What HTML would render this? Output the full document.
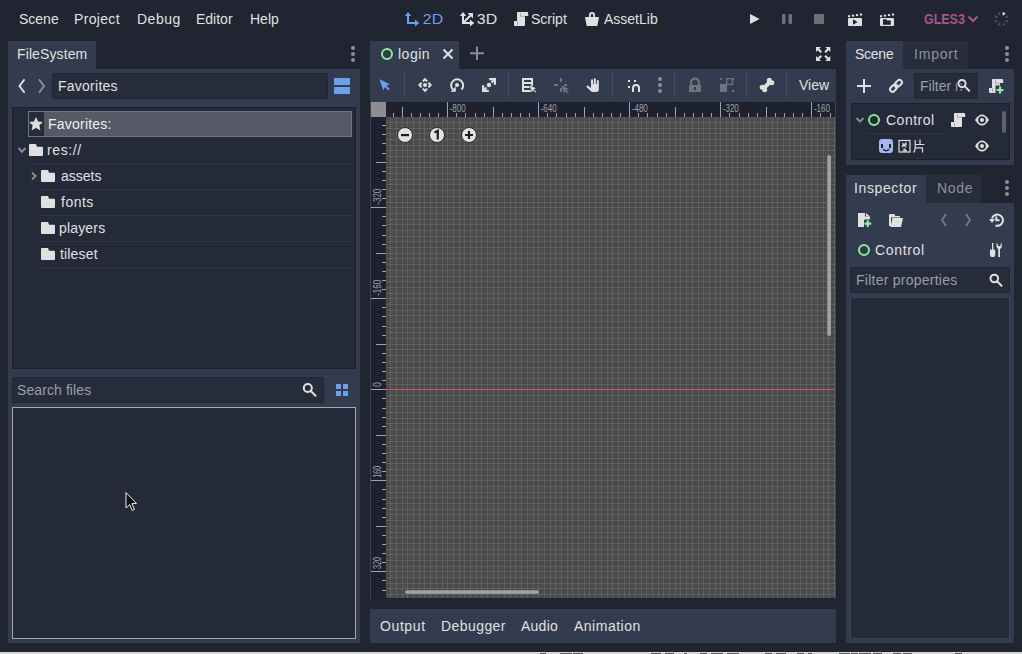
<!DOCTYPE html>
<html><head><meta charset="utf-8">
<style>
*{margin:0;padding:0;box-sizing:border-box}
html,body{width:1022px;height:654px;overflow:hidden;background:#202531;font-family:"Liberation Sans",sans-serif;font-size:14px;color:#e0e0e0}
body{position:relative}
.a{position:absolute}
.t{position:absolute;white-space:nowrap;line-height:14px}
svg{position:absolute;left:0;top:0}
</style></head><body>
<div class="t" style="left:19px;top:12px;color:#e0e0e0;font-size:14px;letter-spacing:0.000px;">Scene</div><div class="t" style="left:74px;top:12px;color:#e0e0e0;font-size:14px;letter-spacing:0.333px;">Project</div><div class="t" style="left:137px;top:12px;color:#e0e0e0;font-size:14px;letter-spacing:0.500px;">Debug</div><div class="t" style="left:196px;top:12px;color:#e0e0e0;font-size:14px;letter-spacing:0.000px;">Editor</div><div class="t" style="left:250px;top:12px;color:#e0e0e0;font-size:14px;letter-spacing:0.000px;">Help</div><div class="t" style="left:423px;top:12px;color:#6d9fea;font-size:14px;transform-origin:1px 0;transform:scaleX(1.133);">2D</div><div class="t" style="left:477px;top:12px;color:#e0e0e0;font-size:14px;transform-origin:1px 0;transform:scaleX(1.133);">3D</div><div class="t" style="left:531px;top:12px;color:#e0e0e0;font-size:14px;letter-spacing:0.000px;">Script</div><div class="t" style="left:604px;top:12px;color:#e0e0e0;font-size:14px;letter-spacing:0.000px;">AssetLib</div><div class="t" style="left:924px;top:12px;color:#a5558b;font-weight:bold;transform-origin:0 0;transform:scaleX(0.89)">GLES3</div><div class="a" style="left:8px;top:41px;width:88px;height:28px;background:#333b4f;"></div><div class="t" style="left:17px;top:47px;color:#e0e0e0;font-size:14px;letter-spacing:0.111px;">FileSystem</div><div class="a" style="left:8px;top:69px;width:352px;height:574px;background:#333b4f;"></div><div class="a" style="left:52px;top:73px;width:276px;height:26px;background:#262c3a;border:1px solid #222735"></div><div class="t" style="left:58px;top:79px;color:#e0e0e0;font-size:14px;letter-spacing:0.250px;">Favorites</div><div class="a" style="left:12px;top:107px;width:344px;height:262px;background:#242a38;border:1px solid #1d212b"></div><div class="a" style="left:28px;top:111px;width:324px;height:26px;background:#565a66;border:1px solid #6e7382"></div><div class="a" style="left:29px;top:112px;width:15px;height:24px;background:#252b39;"></div><div class="t" style="left:48px;top:117px;color:#f0f0f0;font-size:14px;letter-spacing:0.222px;">Favorites:</div><div class="t" style="left:47px;top:143px;color:#e0e0e0;font-size:14px;letter-spacing:0.600px;">res://</div><div class="t" style="left:61px;top:169px;color:#e0e0e0;font-size:14px;letter-spacing:0.000px;">assets</div><div class="t" style="left:61px;top:195px;color:#e0e0e0;font-size:14px;letter-spacing:0.500px;">fonts</div><div class="t" style="left:59px;top:221px;color:#e0e0e0;font-size:14px;letter-spacing:0.167px;">players</div><div class="t" style="left:60px;top:247px;color:#e0e0e0;font-size:14px;letter-spacing:0.167px;">tileset</div><div class="a" style="left:28px;top:163px;width:324px;height:1px;background:#2e3544;"></div><div class="a" style="left:40px;top:189px;width:312px;height:1px;background:#2e3544;"></div><div class="a" style="left:40px;top:215px;width:312px;height:1px;background:#2e3544;"></div><div class="a" style="left:40px;top:241px;width:312px;height:1px;background:#2e3544;"></div><div class="a" style="left:40px;top:267px;width:312px;height:1px;background:#2e3544;"></div><div class="a" style="left:12px;top:377px;width:312px;height:26px;background:#262c3a;border:1px solid #222735"></div><div class="t" style="left:17px;top:383px;color:#9a9ea7;font-size:14px;letter-spacing:0.091px;">Search files</div><div class="a" style="left:12px;top:407px;width:344px;height:232px;background:#242a38;border:1px solid #a3a8b2"></div><div class="a" style="left:370px;top:41px;width:89px;height:28px;background:#333b4f;"></div><div class="t" style="left:398px;top:47px;color:#e0e0e0;font-size:14px;letter-spacing:0.500px;">login</div><div class="a" style="left:370px;top:69px;width:466px;height:33px;background:#333b4f;"></div><div class="a" style="left:404px;top:72px;width:1px;height:26px;background:#434b5f;"></div><div class="a" style="left:508px;top:72px;width:1px;height:26px;background:#434b5f;"></div><div class="a" style="left:612px;top:72px;width:1px;height:26px;background:#434b5f;"></div><div class="a" style="left:674px;top:72px;width:1px;height:26px;background:#434b5f;"></div><div class="a" style="left:746px;top:72px;width:1px;height:26px;background:#434b5f;"></div><div class="a" style="left:786px;top:72px;width:1px;height:26px;background:#434b5f;"></div><div class="t" style="left:799px;top:78px;color:#e0e0e0;font-size:14px;letter-spacing:0.000px;">View</div><div class="a" style="left:370px;top:102px;width:466px;height:497px;background:#1e2230;border-left:1px solid #3a4258;border-right:1px solid #3a4258"></div><div class="a" style="left:386px;top:117px;width:449px;height:481px;background:#4b4b4b;"></div><div class="a" style="left:371px;top:102px;width:15px;height:15px;background:#8b8d92;"></div><div class="a" style="left:370px;top:609px;width:466px;height:34px;background:#333b4f;"></div><div class="t" style="left:380px;top:619px;color:#e0e0e0;font-size:14px;letter-spacing:0.600px;">Output</div><div class="t" style="left:441px;top:619px;color:#e0e0e0;font-size:14px;letter-spacing:0.429px;">Debugger</div><div class="t" style="left:521px;top:619px;color:#e0e0e0;font-size:14px;letter-spacing:0.250px;">Audio</div><div class="t" style="left:574px;top:619px;color:#e0e0e0;font-size:14px;letter-spacing:0.500px;">Animation</div><div class="a" style="left:846px;top:41px;width:57px;height:28px;background:#333b4f;"></div><div class="a" style="left:903px;top:41px;width:65px;height:28px;background:#272d3b;"></div><div class="t" style="left:855px;top:47px;color:#e0e0e0;font-size:14px;letter-spacing:-0.250px;">Scene</div><div class="t" style="left:914px;top:47px;color:#8d929b;font-size:14px;letter-spacing:0.800px;">Import</div><div class="a" style="left:846px;top:69px;width:168px;height:96px;background:#333b4f;"></div><div class="a" style="left:914px;top:73px;width:64px;height:26px;background:#262c3a;border:1px solid #222735;overflow:hidden"></div><div style="position:absolute;left:914px;top:73px;width:64px;height:26px;overflow:hidden"><div class="t" style="left:6px;top:6px;color:#9a9ea7">Filter n</div></div><div class="a" style="left:851px;top:103px;width:159px;height:57px;background:#242a38;border:1px solid #1d212b"></div><div class="t" style="left:886px;top:113px;color:#e0e0e0;font-size:14px;letter-spacing:0.500px;">Control</div><div class="a" style="left:866px;top:133px;width:80px;height:1px;background:#2e3544;"></div><div class="a" style="left:846px;top:175px;width:80px;height:28px;background:#333b4f;"></div><div class="a" style="left:926px;top:175px;width:56px;height:28px;background:#272d3b;"></div><div class="t" style="left:854px;top:181px;color:#e0e0e0;font-size:14px;letter-spacing:0.625px;">Inspector</div><div class="t" style="left:937px;top:181px;color:#8d929b;font-size:14px;letter-spacing:0.667px;">Node</div><div class="a" style="left:846px;top:203px;width:168px;height:440px;background:#333b4f;"></div><div class="t" style="left:875px;top:243px;color:#e0e0e0;font-size:14px;letter-spacing:0.667px;">Control</div><div class="a" style="left:850px;top:267px;width:160px;height:26px;background:#262c3a;border:1px solid #222735"></div><div class="t" style="left:856px;top:273px;color:#9a9ea7;font-size:14px;letter-spacing:0.250px;">Filter properties</div><div class="a" style="left:850px;top:297px;width:160px;height:342px;background:#242a38;border:1px solid #3a4259"></div><div class="a" style="left:0px;top:652px;width:1022px;height:2px;background:#d8d8d8;"></div><div class="a" style="left:540px;top:653px;width:6px;height:1px;background:#5a5a5a;"></div><div class="a" style="left:560px;top:653px;width:12px;height:1px;background:#5a5a5a;"></div><div class="a" style="left:573px;top:653px;width:10px;height:1px;background:#5a5a5a;"></div><div class="a" style="left:651px;top:653px;width:10px;height:1px;background:#5a5a5a;"></div><div class="a" style="left:665px;top:653px;width:9px;height:1px;background:#5a5a5a;"></div><div class="a" style="left:684px;top:653px;width:3px;height:1px;background:#5a5a5a;"></div><div class="a" style="left:700px;top:653px;width:7px;height:1px;background:#5a5a5a;"></div><div class="a" style="left:711px;top:653px;width:12px;height:1px;background:#5a5a5a;"></div><div class="a" style="left:727px;top:653px;width:12px;height:1px;background:#5a5a5a;"></div><div class="a" style="left:765px;top:653px;width:7px;height:1px;background:#5a5a5a;"></div><div class="a" style="left:776px;top:653px;width:10px;height:1px;background:#5a5a5a;"></div><div class="a" style="left:797px;top:653px;width:7px;height:1px;background:#5a5a5a;"></div><div class="a" style="left:808px;top:653px;width:4px;height:1px;background:#5a5a5a;"></div><div class="a" style="left:839px;top:653px;width:11px;height:1px;background:#5a5a5a;"></div><div class="a" style="left:851px;top:653px;width:7px;height:1px;background:#5a5a5a;"></div><div class="a" style="left:859px;top:653px;width:12px;height:1px;background:#5a5a5a;"></div><div class="a" style="left:873px;top:653px;width:9px;height:1px;background:#5a5a5a;"></div><div class="a" style="left:893px;top:653px;width:8px;height:1px;background:#5a5a5a;"></div><div class="a" style="left:903px;top:653px;width:9px;height:1px;background:#5a5a5a;"></div><div class="a" style="left:955px;top:653px;width:7px;height:1px;background:#5a5a5a;"></div>
<svg width="1022" height="654" viewBox="0 0 1022 654">
<g fill="#6d9fea"><path d="M404.8 16 L408 12 L411.2 16 Z"/><rect x="407" y="15" width="2" height="9"/><rect x="407" y="22" width="9" height="2"/><path d="M415 19.6 L419.3 23 L415 26.4 Z"/></g><g fill="#e0e0e0"><path d="M459.8 16 L463 12 L466.2 16 Z"/><rect x="462" y="15" width="2" height="9"/><rect x="462" y="22" width="9" height="2"/><path d="M470 19.6 L474.3 23 L470 26.4 Z"/><path d="M463.3 21.3 L469.8 14.8 L471.2 16.2 L464.7 22.7 Z"/><path d="M467.5 13 L473 13 L473 18.5 Z"/></g><g fill="#e0e0e0"><path d="M517.5 12 H527 a1.2 1.2 0 0 1 1.2 1.2 V16 H525 V25 a1 1 0 0 1 -1 1 H515 a1 1 0 0 1 -1 -1 V21 H517 V13 a1 1 0 0 1 .5 -1 Z"/></g><path d="M520.5 13.2 V16.3 H524.8 M517.5 21.3 V25.3" stroke="#a9a9a9" stroke-width="1" fill="none"/><g fill="#e0e0e0"><path d="M589 17 V15 a3 3 0 0 1 6 0 V17 H593.2 V15.2 a1.2 1.2 0 0 0 -2.4 0 V17 Z"/><path d="M585 17 H599 L597.3 26 H586.7 Z"/></g><path d="M750 14 L759.6 19 L750 24 Z" fill="#e0e0e0"/><g fill="#6c7079"><rect x="782" y="14" width="3.5" height="10" rx="1"/><rect x="788.5" y="14" width="3.5" height="10" rx="1"/><rect x="814" y="14" width="10" height="10" rx="1"/></g><g fill="#e0e0e0"><rect x="848" y="18" width="14" height="8" rx="0.8"/><rect x="847.9" y="15.2" width="2.2" height="2" /><rect x="851.9" y="14.649999999999999" width="2.2" height="2" /><rect x="855.9" y="14.1" width="2.2" height="2" /><rect x="859.9" y="13.549999999999999" width="2.2" height="2" /></g><path d="M853 19.2 L857.6 22 L853 24.8 Z" fill="#202531"/><g fill="#e0e0e0"><rect x="880" y="18" width="14" height="8" rx="0.8"/><rect x="879.9" y="15.2" width="2.2" height="2" /><rect x="883.9" y="14.649999999999999" width="2.2" height="2" /><rect x="887.9" y="14.1" width="2.2" height="2" /><rect x="891.9" y="13.549999999999999" width="2.2" height="2" /></g><path d="M883 19.2 H886.2 L887.2 20.4 H890.8 V24.8 H883 Z" fill="#202531"/><path d="M968.5 16.5 L973 21 L977.5 16.5" stroke="#a5558b" stroke-width="2" fill="none"/><path d="M1002.76 15.95 L1002.61 11.89 L1005.75 13.19 Z" fill="#e8e8e8"/><path d="M1004.55 17.74 L1007.31 14.75 L1008.61 17.89 Z" fill="#494d58"/><path d="M1004.55 20.26 L1008.61 20.11 L1007.31 23.25 Z" fill="#494d58"/><path d="M1002.76 22.05 L1005.75 24.81 L1002.61 26.11 Z" fill="#494d58"/><path d="M1000.24 22.05 L1000.39 26.11 L997.25 24.81 Z" fill="#494d58"/><path d="M998.45 20.26 L995.69 23.25 L994.39 20.11 Z" fill="#494d58"/><path d="M998.45 17.74 L994.39 17.89 L995.69 14.75 Z" fill="#494d58"/><path d="M1000.24 15.95 L997.25 13.19 L1000.39 11.89 Z" fill="#494d58"/><g fill="#8c9099"><circle cx="353" cy="48" r="2"/><circle cx="353" cy="54" r="2"/><circle cx="353" cy="60" r="2"/></g><path d="M24 80 L19.5 86 L24 92" stroke="#e0e0e0" stroke-width="2" fill="none" stroke-linecap="round"/><path d="M39.5 80 L44 86 L39.5 92" stroke="#8d9099" stroke-width="2" fill="none" stroke-linecap="round"/><g fill="#6d9fea"><rect x="334" y="78" width="16" height="7"/><rect x="334" y="87" width="16" height="7"/></g><path d="M36 117.8 L37.8 121.9 L42.3 122.3 L38.9 125.3 L39.9 129.8 L36 127.4 L32.1 129.8 L33.1 125.3 L29.7 122.3 L34.2 121.9 Z" fill="#e0e0e0" stroke="#e0e0e0" stroke-width="0.8" stroke-linejoin="round"/><path d="M18.5 148 L22 151.8 L25.5 148" stroke="#868a93" stroke-width="2" fill="none"/><path d="M29 145 a1 1 0 0 1 1 -1 H36 L37 146.7 H42 a1 1 0 0 1 1 1 V155 a1 1 0 0 1 -1 1 H30 a1 1 0 0 1 -1 -1 Z" fill="#e0e0e0"/><path d="M32 172.5 L35.5 176 L32 179.5" stroke="#868a93" stroke-width="2" fill="none"/><path d="M41 171 a1 1 0 0 1 1 -1 H48 L49 172.7 H54 a1 1 0 0 1 1 1 V181 a1 1 0 0 1 -1 1 H42 a1 1 0 0 1 -1 -1 Z" fill="#e0e0e0"/><path d="M41 197 a1 1 0 0 1 1 -1 H48 L49 198.7 H54 a1 1 0 0 1 1 1 V207 a1 1 0 0 1 -1 1 H42 a1 1 0 0 1 -1 -1 Z" fill="#e0e0e0"/><path d="M41 223 a1 1 0 0 1 1 -1 H48 L49 224.7 H54 a1 1 0 0 1 1 1 V233 a1 1 0 0 1 -1 1 H42 a1 1 0 0 1 -1 -1 Z" fill="#e0e0e0"/><path d="M41 249 a1 1 0 0 1 1 -1 H48 L49 250.7 H54 a1 1 0 0 1 1 1 V259 a1 1 0 0 1 -1 1 H42 a1 1 0 0 1 -1 -1 Z" fill="#e0e0e0"/><g stroke="#e0e0e0" stroke-width="2" fill="none"><circle cx="307.8" cy="388" r="4"/><path d="M310.8 391 L315.5 395.7" stroke-linecap="round"/></g><g fill="#6d9fea"><rect x="336" y="384" width="5" height="5"/><rect x="343" y="384" width="5" height="5"/><rect x="336" y="391" width="5" height="5"/><rect x="343" y="391" width="5" height="5"/></g><path d="M126 492.5 V508 L129.6 504.6 L132.3 510.5 L134.5 509.5 L131.9 503.7 L136.5 503.4 Z" fill="#111" stroke="#eee" stroke-width="1"/><circle cx="387" cy="54" r="5" stroke="#8eea98" stroke-width="2" fill="none"/><path d="M443.5 49.5 L452.5 58.5 M452.5 49.5 L443.5 58.5" stroke="#e0e0e0" stroke-width="2"/><path d="M477 46.5 V60 M470 53.2 H484" stroke="#8a8e96" stroke-width="2"/><g fill="#e0e0e0"><path d="M816 47 H821 L819.3 48.7 L822 51.4 L820.4 53 L817.7 50.3 L816 52 Z"/><path d="M830.3 47 H825.3 L827 48.7 L824.3 51.4 L825.9 53 L828.6 50.3 L830.3 52 Z"/><path d="M816 61 H821 L819.3 59.3 L822 56.6 L820.4 55 L817.7 57.7 L816 56 Z"/><path d="M830.3 61 H825.3 L827 59.3 L824.3 56.6 L825.9 55 L828.6 57.7 L830.3 56 Z"/></g><g fill="#ffffff" fill-opacity="0.1"><rect x="390" y="117" width="1" height="481"/><rect x="396" y="117" width="1" height="481"/><rect x="402" y="117" width="1" height="481"/><rect x="407" y="117" width="1" height="481"/><rect x="413" y="117" width="1" height="481"/><rect x="419" y="117" width="1" height="481"/><rect x="424" y="117" width="1" height="481"/><rect x="430" y="117" width="1" height="481"/><rect x="436" y="117" width="1" height="481"/><rect x="442" y="117" width="1" height="481"/><rect x="447" y="117" width="1" height="481"/><rect x="453" y="117" width="1" height="481"/><rect x="459" y="117" width="1" height="481"/><rect x="464" y="117" width="1" height="481"/><rect x="470" y="117" width="1" height="481"/><rect x="476" y="117" width="1" height="481"/><rect x="481" y="117" width="1" height="481"/><rect x="487" y="117" width="1" height="481"/><rect x="493" y="117" width="1" height="481"/><rect x="498" y="117" width="1" height="481"/><rect x="504" y="117" width="1" height="481"/><rect x="510" y="117" width="1" height="481"/><rect x="515" y="117" width="1" height="481"/><rect x="521" y="117" width="1" height="481"/><rect x="527" y="117" width="1" height="481"/><rect x="533" y="117" width="1" height="481"/><rect x="538" y="117" width="1" height="481"/><rect x="544" y="117" width="1" height="481"/><rect x="550" y="117" width="1" height="481"/><rect x="555" y="117" width="1" height="481"/><rect x="561" y="117" width="1" height="481"/><rect x="567" y="117" width="1" height="481"/><rect x="572" y="117" width="1" height="481"/><rect x="578" y="117" width="1" height="481"/><rect x="584" y="117" width="1" height="481"/><rect x="589" y="117" width="1" height="481"/><rect x="595" y="117" width="1" height="481"/><rect x="601" y="117" width="1" height="481"/><rect x="607" y="117" width="1" height="481"/><rect x="612" y="117" width="1" height="481"/><rect x="618" y="117" width="1" height="481"/><rect x="624" y="117" width="1" height="481"/><rect x="629" y="117" width="1" height="481"/><rect x="635" y="117" width="1" height="481"/><rect x="641" y="117" width="1" height="481"/><rect x="646" y="117" width="1" height="481"/><rect x="652" y="117" width="1" height="481"/><rect x="658" y="117" width="1" height="481"/><rect x="663" y="117" width="1" height="481"/><rect x="669" y="117" width="1" height="481"/><rect x="675" y="117" width="1" height="481"/><rect x="680" y="117" width="1" height="481"/><rect x="686" y="117" width="1" height="481"/><rect x="692" y="117" width="1" height="481"/><rect x="698" y="117" width="1" height="481"/><rect x="703" y="117" width="1" height="481"/><rect x="709" y="117" width="1" height="481"/><rect x="715" y="117" width="1" height="481"/><rect x="720" y="117" width="1" height="481"/><rect x="726" y="117" width="1" height="481"/><rect x="732" y="117" width="1" height="481"/><rect x="737" y="117" width="1" height="481"/><rect x="743" y="117" width="1" height="481"/><rect x="749" y="117" width="1" height="481"/><rect x="754" y="117" width="1" height="481"/><rect x="760" y="117" width="1" height="481"/><rect x="766" y="117" width="1" height="481"/><rect x="772" y="117" width="1" height="481"/><rect x="777" y="117" width="1" height="481"/><rect x="783" y="117" width="1" height="481"/><rect x="789" y="117" width="1" height="481"/><rect x="794" y="117" width="1" height="481"/><rect x="800" y="117" width="1" height="481"/><rect x="806" y="117" width="1" height="481"/><rect x="811" y="117" width="1" height="481"/><rect x="817" y="117" width="1" height="481"/><rect x="823" y="117" width="1" height="481"/><rect x="828" y="117" width="1" height="481"/><rect x="834" y="117" width="1" height="481"/><rect x="386" y="122" width="449" height="1"/><rect x="386" y="128" width="449" height="1"/><rect x="386" y="133" width="449" height="1"/><rect x="386" y="139" width="449" height="1"/><rect x="386" y="145" width="449" height="1"/><rect x="386" y="150" width="449" height="1"/><rect x="386" y="156" width="449" height="1"/><rect x="386" y="162" width="449" height="1"/><rect x="386" y="167" width="449" height="1"/><rect x="386" y="173" width="449" height="1"/><rect x="386" y="179" width="449" height="1"/><rect x="386" y="184" width="449" height="1"/><rect x="386" y="190" width="449" height="1"/><rect x="386" y="196" width="449" height="1"/><rect x="386" y="202" width="449" height="1"/><rect x="386" y="207" width="449" height="1"/><rect x="386" y="213" width="449" height="1"/><rect x="386" y="219" width="449" height="1"/><rect x="386" y="224" width="449" height="1"/><rect x="386" y="230" width="449" height="1"/><rect x="386" y="236" width="449" height="1"/><rect x="386" y="241" width="449" height="1"/><rect x="386" y="247" width="449" height="1"/><rect x="386" y="253" width="449" height="1"/><rect x="386" y="258" width="449" height="1"/><rect x="386" y="264" width="449" height="1"/><rect x="386" y="270" width="449" height="1"/><rect x="386" y="276" width="449" height="1"/><rect x="386" y="281" width="449" height="1"/><rect x="386" y="287" width="449" height="1"/><rect x="386" y="293" width="449" height="1"/><rect x="386" y="298" width="449" height="1"/><rect x="386" y="304" width="449" height="1"/><rect x="386" y="310" width="449" height="1"/><rect x="386" y="315" width="449" height="1"/><rect x="386" y="321" width="449" height="1"/><rect x="386" y="327" width="449" height="1"/><rect x="386" y="332" width="449" height="1"/><rect x="386" y="338" width="449" height="1"/><rect x="386" y="344" width="449" height="1"/><rect x="386" y="349" width="449" height="1"/><rect x="386" y="355" width="449" height="1"/><rect x="386" y="361" width="449" height="1"/><rect x="386" y="367" width="449" height="1"/><rect x="386" y="372" width="449" height="1"/><rect x="386" y="378" width="449" height="1"/><rect x="386" y="384" width="449" height="1"/><rect x="386" y="389" width="449" height="1"/><rect x="386" y="395" width="449" height="1"/><rect x="386" y="401" width="449" height="1"/><rect x="386" y="406" width="449" height="1"/><rect x="386" y="412" width="449" height="1"/><rect x="386" y="418" width="449" height="1"/><rect x="386" y="423" width="449" height="1"/><rect x="386" y="429" width="449" height="1"/><rect x="386" y="435" width="449" height="1"/><rect x="386" y="441" width="449" height="1"/><rect x="386" y="446" width="449" height="1"/><rect x="386" y="452" width="449" height="1"/><rect x="386" y="458" width="449" height="1"/><rect x="386" y="463" width="449" height="1"/><rect x="386" y="469" width="449" height="1"/><rect x="386" y="475" width="449" height="1"/><rect x="386" y="480" width="449" height="1"/><rect x="386" y="486" width="449" height="1"/><rect x="386" y="492" width="449" height="1"/><rect x="386" y="497" width="449" height="1"/><rect x="386" y="503" width="449" height="1"/><rect x="386" y="509" width="449" height="1"/><rect x="386" y="514" width="449" height="1"/><rect x="386" y="520" width="449" height="1"/><rect x="386" y="526" width="449" height="1"/><rect x="386" y="532" width="449" height="1"/><rect x="386" y="537" width="449" height="1"/><rect x="386" y="543" width="449" height="1"/><rect x="386" y="549" width="449" height="1"/><rect x="386" y="554" width="449" height="1"/><rect x="386" y="560" width="449" height="1"/><rect x="386" y="566" width="449" height="1"/><rect x="386" y="571" width="449" height="1"/><rect x="386" y="577" width="449" height="1"/><rect x="386" y="583" width="449" height="1"/><rect x="386" y="588" width="449" height="1"/><rect x="386" y="594" width="449" height="1"/></g><rect x="386" y="389" width="449" height="1" fill="#c85a5a"/><g fill="#9ea2aa"><rect x="393" y="113" width="1" height="4"/><rect x="402" y="107" width="1" height="10"/><rect x="411" y="113" width="1" height="4"/><rect x="420" y="113" width="1" height="4"/><rect x="429" y="113" width="1" height="4"/><rect x="438" y="113" width="1" height="4"/><rect x="447" y="102" width="1" height="15"/><rect x="456" y="113" width="1" height="4"/><rect x="465" y="113" width="1" height="4"/><rect x="475" y="113" width="1" height="4"/><rect x="484" y="113" width="1" height="4"/><rect x="493" y="107" width="1" height="10"/><rect x="502" y="113" width="1" height="4"/><rect x="511" y="113" width="1" height="4"/><rect x="520" y="113" width="1" height="4"/><rect x="529" y="113" width="1" height="4"/><rect x="538" y="102" width="1" height="15"/><rect x="547" y="113" width="1" height="4"/><rect x="556" y="113" width="1" height="4"/><rect x="566" y="113" width="1" height="4"/><rect x="575" y="113" width="1" height="4"/><rect x="584" y="107" width="1" height="10"/><rect x="593" y="113" width="1" height="4"/><rect x="602" y="113" width="1" height="4"/><rect x="611" y="113" width="1" height="4"/><rect x="620" y="113" width="1" height="4"/><rect x="629" y="102" width="1" height="15"/><rect x="638" y="113" width="1" height="4"/><rect x="647" y="113" width="1" height="4"/><rect x="657" y="113" width="1" height="4"/><rect x="666" y="113" width="1" height="4"/><rect x="675" y="107" width="1" height="10"/><rect x="684" y="113" width="1" height="4"/><rect x="693" y="113" width="1" height="4"/><rect x="702" y="113" width="1" height="4"/><rect x="711" y="113" width="1" height="4"/><rect x="720" y="102" width="1" height="15"/><rect x="729" y="113" width="1" height="4"/><rect x="739" y="113" width="1" height="4"/><rect x="748" y="113" width="1" height="4"/><rect x="757" y="113" width="1" height="4"/><rect x="766" y="107" width="1" height="10"/><rect x="775" y="113" width="1" height="4"/><rect x="784" y="113" width="1" height="4"/><rect x="793" y="113" width="1" height="4"/><rect x="802" y="113" width="1" height="4"/><rect x="811" y="102" width="1" height="15"/><rect x="820" y="113" width="1" height="4"/><rect x="830" y="113" width="1" height="4"/><rect x="382" y="125" width="4" height="1"/><rect x="382" y="134" width="4" height="1"/><rect x="382" y="143" width="4" height="1"/><rect x="382" y="153" width="4" height="1"/><rect x="376" y="162" width="10" height="1"/><rect x="382" y="171" width="4" height="1"/><rect x="382" y="180" width="4" height="1"/><rect x="382" y="189" width="4" height="1"/><rect x="382" y="198" width="4" height="1"/><rect x="371" y="207" width="15" height="1"/><rect x="382" y="216" width="4" height="1"/><rect x="382" y="225" width="4" height="1"/><rect x="382" y="235" width="4" height="1"/><rect x="382" y="244" width="4" height="1"/><rect x="376" y="253" width="10" height="1"/><rect x="382" y="262" width="4" height="1"/><rect x="382" y="271" width="4" height="1"/><rect x="382" y="280" width="4" height="1"/><rect x="382" y="289" width="4" height="1"/><rect x="371" y="298" width="15" height="1"/><rect x="382" y="307" width="4" height="1"/><rect x="382" y="316" width="4" height="1"/><rect x="382" y="326" width="4" height="1"/><rect x="382" y="335" width="4" height="1"/><rect x="376" y="344" width="10" height="1"/><rect x="382" y="353" width="4" height="1"/><rect x="382" y="362" width="4" height="1"/><rect x="382" y="371" width="4" height="1"/><rect x="382" y="380" width="4" height="1"/><rect x="371" y="389" width="15" height="1"/><rect x="382" y="398" width="4" height="1"/><rect x="382" y="408" width="4" height="1"/><rect x="382" y="417" width="4" height="1"/><rect x="382" y="426" width="4" height="1"/><rect x="376" y="435" width="10" height="1"/><rect x="382" y="444" width="4" height="1"/><rect x="382" y="453" width="4" height="1"/><rect x="382" y="462" width="4" height="1"/><rect x="382" y="471" width="4" height="1"/><rect x="371" y="480" width="15" height="1"/><rect x="382" y="489" width="4" height="1"/><rect x="382" y="499" width="4" height="1"/><rect x="382" y="508" width="4" height="1"/><rect x="382" y="517" width="4" height="1"/><rect x="376" y="526" width="10" height="1"/><rect x="382" y="535" width="4" height="1"/><rect x="382" y="544" width="4" height="1"/><rect x="382" y="553" width="4" height="1"/><rect x="382" y="562" width="4" height="1"/><rect x="371" y="571" width="15" height="1"/><rect x="382" y="580" width="4" height="1"/><rect x="382" y="590" width="4" height="1"/></g><text x="449.7" y="112" font-size="10" fill="#9ea2aa" font-family="Liberation Sans" textLength="16" lengthAdjust="spacingAndGlyphs">-800</text><text x="540.7" y="112" font-size="10" fill="#9ea2aa" font-family="Liberation Sans" textLength="16" lengthAdjust="spacingAndGlyphs">-640</text><text x="631.8" y="112" font-size="10" fill="#9ea2aa" font-family="Liberation Sans" textLength="16" lengthAdjust="spacingAndGlyphs">-480</text><text x="722.8" y="112" font-size="10" fill="#9ea2aa" font-family="Liberation Sans" textLength="16" lengthAdjust="spacingAndGlyphs">-320</text><text x="813.9" y="112" font-size="10" fill="#9ea2aa" font-family="Liberation Sans" textLength="16" lengthAdjust="spacingAndGlyphs">-160</text><text transform="translate(381,204.7) rotate(-90)" x="0" y="0" font-size="10" fill="#9ea2aa" font-family="Liberation Sans" textLength="16" lengthAdjust="spacingAndGlyphs">-320</text><text transform="translate(381,295.8) rotate(-90)" x="0" y="0" font-size="10" fill="#9ea2aa" font-family="Liberation Sans" textLength="16" lengthAdjust="spacingAndGlyphs">-160</text><text transform="translate(381,386.8) rotate(-90)" x="0" y="0" font-size="10" fill="#9ea2aa" font-family="Liberation Sans" textLength="4.5" lengthAdjust="spacingAndGlyphs">0</text><text transform="translate(381,477.8) rotate(-90)" x="0" y="0" font-size="10" fill="#9ea2aa" font-family="Liberation Sans" textLength="12" lengthAdjust="spacingAndGlyphs">160</text><text transform="translate(381,568.9) rotate(-90)" x="0" y="0" font-size="10" fill="#9ea2aa" font-family="Liberation Sans" textLength="12" lengthAdjust="spacingAndGlyphs">320</text><circle cx="405" cy="135" r="7.5" fill="#e2e2e2" stroke="#2b2b2b" stroke-width="1"/><rect x="401" y="134" width="8" height="2.2" fill="#1e1e1e"/><circle cx="437" cy="135" r="7.5" fill="#e2e2e2" stroke="#2b2b2b" stroke-width="1"/><path d="M434.5 132.5 L437.8 130.8 V139.5" stroke="#1e1e1e" stroke-width="2.2" fill="none"/><circle cx="469" cy="135" r="7.5" fill="#e2e2e2" stroke="#2b2b2b" stroke-width="1"/><path d="M465 135 H473 M469 131 V139" stroke="#1e1e1e" stroke-width="2.2"/><rect x="827.3" y="155" width="3.6" height="181" rx="1.8" fill="#a3a3a3"/><rect x="405" y="590.2" width="134" height="3.6" rx="1.8" fill="#a3a3a3"/><path d="M379.4 79.3 L390 84.3 L386.3 85.6 L389.8 89 L388.3 90.4 L384.9 86.9 L383.4 90.6 Z" fill="#6d9fea"/><g fill="#e0e0e0"><circle cx="425" cy="85" r="2"/></g><g stroke="#e0e0e0" stroke-width="2" fill="none"><path d="M422.8 81.4 L425 79.2 L427.2 81.4"/><path d="M422.8 88.6 L425 90.8 L427.2 88.6"/><path d="M421.6 82.8 L419.4 85 L421.6 87.2"/><path d="M428.4 82.8 L430.6 85 L428.4 87.2"/></g><g><circle cx="457" cy="85" r="2" fill="#e0e0e0"/><path d="M452.8 89.5 A6 6 0 1 1 461.5 89.5" stroke="#e0e0e0" stroke-width="2" fill="none"/><path d="M450.5 91.8 H455.8 V86.5 Z" fill="#e0e0e0"/></g><g fill="#e0e0e0"><circle cx="489" cy="85" r="2.2"/></g><g stroke="#e0e0e0" stroke-width="2.2" fill="none"><path d="M489.2 79.1 H494.9 V84.8"/><path d="M483.1 85.2 V90.9 H488.8"/><path d="M494.5 79.5 L491.5 82.5"/><path d="M483.5 90.5 L486.5 87.5"/></g><path d="M522 78 H533 V92 H522 Z M524 80 V82 H531 V80 Z M524 84 V86 H531 V84 Z M524 88 V90 H531 V88 Z" fill="#e0e0e0" fill-rule="evenodd"/><path d="M528.5 84 L537.5 88.3 L534.6 89.4 L537.3 92.1 L535.6 93.8 L532.9 91.1 L531.8 94 Z" fill="#333b4f"/><path d="M529.6 85.2 L536 88.3 L533.6 89.2 L536.2 91.8 L535.4 92.6 L532.8 90 L531.9 92.4 Z" fill="#e0e0e0"/><g fill="#6f737d"><rect x="560" y="78" width="2" height="4"/><rect x="554" y="84" width="4" height="2"/><rect x="560" y="88" width="2" height="4"/><rect x="564" y="84" width="3" height="2"/></g><path d="M561.3 85.3 L569 89 L566.3 90 L568.8 92.5 L567.7 93.6 L565.2 91.1 L564.2 93.8 Z" fill="#6f737d"/><path d="M591 80.3 a1 1 0 0 1 2 0 V84 H593.8 V79.2 a1 1 0 0 1 2 0 V84 H596.8 V81 a1 1 0 0 1 2 0 V89.5 a2.5 2.5 0 0 1 -2.5 2.5 H592.5 a2 2 0 0 1 -1.5 -0.7 L586.7 87.3 a1.1 1.1 0 0 1 1.6 -1.5 L591 88 Z" fill="#e0e0e0"/><g fill="#e0e0e0"><rect x="628" y="80" width="2" height="2"/><rect x="634" y="80" width="2" height="2"/><rect x="628" y="86" width="2" height="2"/><path d="M632 92 V88 a4 4 0 0 1 8 0 V92 H638 V88 a2 2 0 0 0 -4 0 V92 Z"/></g><g fill="#8a8e98"><circle cx="660" cy="79" r="2"/><circle cx="660" cy="85" r="2"/><circle cx="660" cy="91" r="2"/></g><g fill="#6f737d"><path d="M690 85 V82.5 a5 5 0 0 1 10 0 V85 H697.8 V82.5 a2.8 2.8 0 0 0 -5.6 0 V85 Z"/><path d="M689 85 H701 V92 H689 Z M694 87 V90 H696 V87 Z" fill-rule="evenodd"/></g><g fill="#6f737d"><rect x="720" y="78" width="2" height="2"/><rect x="732" y="78" width="2" height="2"/><rect x="720" y="90" width="2" height="2"/><rect x="732" y="90" width="2" height="2"/><rect x="720" y="84" width="7" height="8"/><path d="M726 78 H733 V85 H726 Z M727.3 79.3 V83.7 H731.7 V79.3 Z" fill-rule="evenodd"/></g><g fill="#e0e0e0"><path d="M764 88 L770 82" stroke="#e0e0e0" stroke-width="4"/><circle cx="762.2" cy="87.3" r="2.5"/><circle cx="764.7" cy="89.8" r="2.5"/><circle cx="769.3" cy="80.2" r="2.5"/><circle cx="771.8" cy="82.7" r="2.5"/></g><g fill="#8c9099"><circle cx="1007" cy="48" r="2"/><circle cx="1007" cy="54" r="2"/><circle cx="1007" cy="60" r="2"/></g><path d="M864 79 V93 M857 86 H871" stroke="#e0e0e0" stroke-width="2"/><g stroke="#e0e0e0" stroke-width="2" fill="none"><rect x="-3.7" y="-2.5" width="7.4" height="5" rx="2.5" transform="translate(893.4,88.4) rotate(-45)"/><rect x="-3.7" y="-2.5" width="7.4" height="5" rx="2.5" transform="translate(898.6,83.2) rotate(-45)"/><path d="M894.6 87.2 L897.4 84.4"/></g><g stroke="#262c3a" stroke-width="3.6" fill="none"><circle cx="962" cy="83.6" r="3.6"/></g><g stroke="#e0e0e0" stroke-width="2" fill="none"><circle cx="962" cy="83.6" r="3.6"/><path d="M964.8 86.4 L969.2 90.8" stroke-linecap="round"/></g><g fill="#e0e0e0"><path d="M992.5 79 H1002 a1.2 1.2 0 0 1 1.2 1.2 V83 H1000 V92 a1 1 0 0 1 -1 1 H990 a1 1 0 0 1 -1 -1 V88 H992 V80 a1 1 0 0 1 .5 -1 Z"/></g><path d="M995.5 80.2 V83.3 H999.8 M992.5 88.3 V92.3" stroke="#a9a9a9" stroke-width="1" fill="none"/><rect x="995.5" y="85.5" width="9" height="9" fill="#333b4f"/><path d="M996.5 90 H1003.5 M1000 86.5 V93.5" stroke="#8eeda0" stroke-width="2.2"/><path d="M856.5 118 L860 121.5 L863.5 118" stroke="#868a93" stroke-width="2" fill="none"/><circle cx="874" cy="120" r="5" stroke="#8eea98" stroke-width="2" fill="none"/><g fill="#e0e0e0"><path d="M954.5 113 H964 a1.2 1.2 0 0 1 1.2 1.2 V117 H962 V126 a1 1 0 0 1 -1 1 H952 a1 1 0 0 1 -1 -1 V122 H954 V114 a1 1 0 0 1 .5 -1 Z"/></g><path d="M957.5 114.2 V117.3 H961.8 M954.5 122.3 V126.3" stroke="#a9a9a9" stroke-width="1" fill="none"/><path d="M975 120 Q982 109 989 120 Q982 131 975 120 Z" fill="#e0e0e0"/><circle cx="982" cy="120" r="3.8" fill="#252b39"/><circle cx="982" cy="120" r="2" fill="#e0e0e0"/><path d="M975 146 Q982 135 989 146 Q982 157 975 146 Z" fill="#e0e0e0"/><circle cx="982" cy="146" r="3.8" fill="#252b39"/><circle cx="982" cy="146" r="2" fill="#e0e0e0"/><rect x="1002" y="111" width="4" height="22" rx="2" fill="#5d626e"/><rect x="879" y="139" width="14" height="14" rx="3" fill="#a6b6f2"/><g fill="#1d2233"><rect x="881" y="144" width="2" height="4"/><rect x="889" y="144" width="2" height="4"/><path d="M883 149.3 Q886 152.3 889 149.3" stroke="#1d2233" stroke-width="1.5" fill="none"/></g><g stroke="#dcdcdc" stroke-width="1.2" fill="none"><rect x="899" y="140.5" width="11" height="11.5"/><path d="M902.5 143 L906 147.5 M906.5 142.5 L902 147 M902 145 H907 M903.5 148.5 L906 150.5 M902.5 150.8 H907"/><path d="M915.2 140 V147 Q915.2 151 913.5 152.5 M915.2 144.5 H924.5 M915.2 147.8 H922.5 V152.5 M920 139.5 V144.5"/></g><g fill="#8c9099"><circle cx="1007" cy="182" r="2"/><circle cx="1007" cy="188" r="2"/><circle cx="1007" cy="194" r="2"/></g><g fill="#e0e0e0"><path d="M858 213 H865 V216.6 H870 V219.5 H865 V227 H858 Z"/><path d="M866 213 L870 216.6 H866 Z"/></g><rect x="864" y="219.8" width="8" height="8" fill="#333b4f"/><path d="M864.5 223.6 H871.2 M867.8 220.3 V227" stroke="#8eeda0" stroke-width="2.2"/><path d="M889 215 a1 1 0 0 1 1 -1 H894 L895.5 216 H900 V217.5 H891 V226 H889 Z" fill="#e0e0e0"/><path d="M892.5 218 H903 L901 227 H890.5 Z" fill="#e0e0e0"/><path d="M946 214 L942 220 L946 226" stroke="#767a83" stroke-width="1.8" fill="none"/><path d="M966 214 L970 220 L966 226" stroke="#767a83" stroke-width="1.8" fill="none"/><g stroke="#e0e0e0" stroke-width="2" fill="none"><path d="M992 218.5 A5.6 5.6 0 1 1 995.5 225.5"/><path d="M996.3 216.5 V220.3 H999.5"/></g><path d="M989 219 H995 L992 223 Z" fill="#e0e0e0"/><circle cx="864" cy="250" r="5" stroke="#8eea98" stroke-width="2" fill="none"/><g fill="#e0e0e0"><rect x="992" y="243" width="1.3" height="7"/><path d="M990 249.5 H995.2 V254.5 a2.6 2.6 0 0 1 -5.2 0 Z"/><path d="M996.5 243.5 V246.5 a2.5 2.5 0 0 0 1.8 2.4 V257 H1000 V248.9 a2.5 2.5 0 0 0 1.8 -2.4 V243.5 H1000.5 V246 H997.8 V243.5 Z"/></g><g stroke="#e0e0e0" stroke-width="2" fill="none"><circle cx="994.3" cy="278.5" r="3.8"/><path d="M997.2 281.4 L1001.5 285.7" stroke-linecap="round"/></g>
</svg>
</body></html>
